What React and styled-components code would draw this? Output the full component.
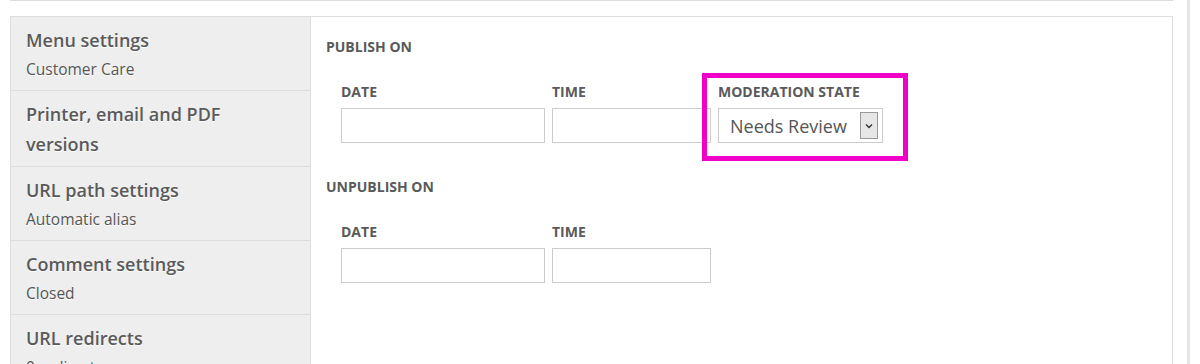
import React from "react";
import styled, { createGlobalStyle } from "styled-components";

const GlobalStyle = createGlobalStyle`
  html, body { margin: 0; padding: 0; background: #fff; }
  body { font-family: "Open Sans", "DejaVu Sans", sans-serif; color: #555; overflow: hidden; }
  * { box-sizing: border-box; }
`;

const Page = styled.div`
  display: flex;
  height: 364px;
  overflow: hidden;
`;

const Column = styled.div`
  width: 1163px;
  margin-left: 10px;
  display: flex;
  flex-direction: column;
`;

const Strip = styled.div`
  width: 3px;
  margin-left: 14px;
  background: #e4e4e4;
`;

const TopBox = styled.div`
  height: 2px;
  border: 1px solid #ddd;
  border-top: none;
`;

const Panel = styled.div`
  margin-top: 15px;
  flex: 1;
  display: flex;
  border: 1px solid #ddd;
  border-bottom: none;
`;

const Sidebar = styled.ul`
  list-style: none;
  margin: 0;
  padding: 0;
  width: 300px;
  background: #eee;
  border-right: 1px solid #ddd;
`;

const Tab = styled.li`
  padding: 8px 15px 7px;
  border-bottom: 1px solid #ddd;
  text-shadow: 0 1px 0 #fff;
`;

const TabTitle = styled.div`
  font-size: 18px;
  font-weight: 600;
  line-height: 30px;
  color: #5a5a5a;
`;

const TabSummary = styled.div`
  font-size: 15.5px;
  line-height: 28px;
  color: #555;
`;

const Pane = styled.div`
  flex: 1;
  padding: 20px 15px 0;
`;

const Legend = styled.div`
  font-size: 14px;
  font-weight: 700;
  line-height: 20px;
  text-transform: uppercase;
  color: #5a5a5a;
`;

const FieldRow = styled.div`
  display: flex;
  gap: 7px;
  padding-left: 15px;
  margin: 25px 0 34px;
`;

const Field = styled.div`
  position: relative;
  display: flex;
  flex-direction: column;
  width: ${(p) => p.$w}px;
`;

const Label = styled.label`
  font-size: 14px;
  font-weight: 700;
  line-height: 20px;
  margin-bottom: 6px;
  text-transform: uppercase;
  color: #5a5a5a;
`;

const TextInput = styled.input`
  height: 35px;
  width: 100%;
  border: 1px solid #ccc;
  background: #fff;
  padding: 0 6px;
  font: inherit;
`;

const SelectBox = styled.div`
  height: 35px;
  width: 100%;
  border: 1px solid #ccc;
  background: #fff;
  display: flex;
  align-items: center;
  justify-content: space-between;
  padding: 0 4px 0 11px;
  font-size: 18px;
  color: #555;
`;

const SelectButton = styled.span`
  width: 18px;
  height: 27px;
  border: 1px solid #999;
  background: #e6e6e6;
  display: flex;
  align-items: center;
  justify-content: center;
`;

const Highlight = styled.div`
  position: absolute;
  left: -16px;
  right: -25px;
  top: -9px;
  bottom: -18px;
  border: 5px solid #f000c8;
  pointer-events: none;
`;

const tabs = [
  { title: "Menu settings", summary: "Customer Care" },
  { title: "Printer, email and PDF versions" },
  { title: "URL path settings", summary: "Automatic alias" },
  { title: "Comment settings", summary: "Closed" },
  { title: "URL redirects", summary: "0 redirects" },
];

function DateTime({ withState }) {
  return (
    <FieldRow>
      <Field $w={204}>
        <Label>Date</Label>
        <TextInput type="text" />
      </Field>
      <Field $w={159}>
        <Label>Time</Label>
        <TextInput type="text" />
      </Field>
      {withState && (
        <Field $w={165}>
          <Label>Moderation state</Label>
          <SelectBox>
            <span>Needs Review</span>
            <SelectButton>
              <svg width="8" height="6" viewBox="0 0 8 6">
                <path d="M1 1.5 L4 4.5 L7 1.5" fill="none" stroke="#333" strokeWidth="1.4" />
              </svg>
            </SelectButton>
          </SelectBox>
          <Highlight />
        </Field>
      )}
    </FieldRow>
  );
}

export default function App() {
  return (
    <>
      <GlobalStyle />
      <Page>
        <Column>
          <TopBox />
          <Panel>
            <Sidebar>
              {tabs.map((t) => (
                <Tab key={t.title}>
                  <TabTitle>{t.title}</TabTitle>
                  {t.summary && <TabSummary>{t.summary}</TabSummary>}
                </Tab>
              ))}
            </Sidebar>
            <Pane>
              <Legend>Publish on</Legend>
              <DateTime withState />
              <Legend>Unpublish on</Legend>
              <DateTime />
            </Pane>
          </Panel>
        </Column>
        <Strip />
      </Page>
    </>
  );
}
